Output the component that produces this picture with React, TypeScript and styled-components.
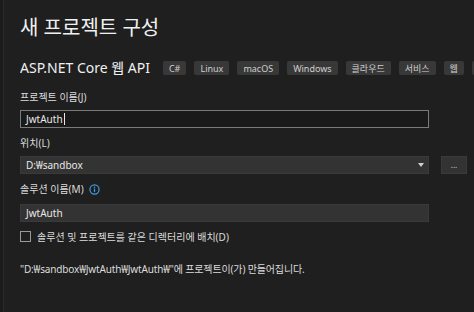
import styled, { createGlobalStyle } from "styled-components";

const GlobalStyle = createGlobalStyle`
  html, body {
    margin: 0;
    padding: 0;
    background: #1f1f1f;
  }
  body {
    font-family: "Noto Sans", "Noto Sans CJK KR", sans-serif;
    color: #e6e6e6;
  }
`;

const Frame = styled.div`
  width: 474px;
  height: 312px;
  display: flex;
  overflow: hidden;
  background: #1f1f1f;
`;

const EdgeStrip = styled.div`
  width: 3px;
  flex: none;
  background: #1b1b1b;
  border-right: 1px solid #2a2a2a;
`;

const Content = styled.main`
  flex: 1;
  padding: 13px 0 0 16px;
  display: flex;
  flex-direction: column;
  min-width: 0;
`;

const Title = styled.h1`
  margin: 0;
  font-size: 20px;
  font-weight: 400;
  line-height: 30px;
  color: #f0f0f0;
`;

const TemplateRow = styled.div`
  display: flex;
  align-items: center;
  gap: 8px;
  margin-top: 14px;
  white-space: nowrap;
  overflow: hidden;
`;

const TemplateName = styled.h2`
  margin: 0 5px 0 0;
  font-size: 14px;
  font-weight: 400;
  line-height: 22px;
  color: #f0f0f0;
`;

const Tag = styled.span`
  display: inline-flex;
  align-items: center;
  height: 14px;
  padding: 0 6px;
  background: #383838;
  border-radius: 2px;
  font-size: 9px;
  color: #cfcfcf;
`;

const Field = styled.div<{ $gap?: number; $top?: number }>`
  display: flex;
  flex-direction: column;
  gap: ${({ $gap }) => $gap ?? 6}px;
  margin-top: ${({ $top }) => $top ?? 8}px;
`;

const Label = styled.label`
  display: flex;
  align-items: center;
  gap: 5px;
  font-size: 10px;
  line-height: 14px;
  color: #dcdcdc;
`;

const InputRow = styled.div`
  display: flex;
  align-items: center;
  gap: 12px;
`;

const TextBox = styled.div<{ $focused?: boolean }>`
  width: 409px;
  height: 18px;
  box-sizing: border-box;
  display: flex;
  align-items: center;
  padding: 0 5px;
  font-size: 10px;
  color: #e8e8e8;
  background: ${({ $focused }) => ($focused ? "#1a1a1a" : "#333333")};
  border: 1px solid ${({ $focused }) => ($focused ? "#7a7a7a" : "#3a3a3a")};
`;

const Caret = styled.span`
  width: 1px;
  height: 12px;
  background: #e8e8e8;
  margin-left: 1px;
`;

const SelectBox = styled(TextBox)`
  justify-content: space-between;
  padding-right: 4px;
`;

const BrowseButton = styled.button`
  width: 26px;
  height: 18px;
  padding: 0;
  background: #333333;
  border: 1px solid #3a3a3a;
  color: #cfcfcf;
  font-size: 8px;
  line-height: 1;
  font-family: inherit;
`;

const CheckRow = styled.label`
  display: flex;
  align-items: center;
  gap: 6px;
  margin-top: 7px;
  font-size: 10px;
  color: #dcdcdc;
`;

const CheckBox = styled.span`
  width: 11px;
  height: 11px;
  border: 1px solid #9a9a9a;
  box-sizing: border-box;
`;

const Note = styled.p`
  margin: 17px 0 0;
  font-size: 10px;
  letter-spacing: -0.15px;
  color: #dcdcdc;
`;

function InfoIcon() {
  return (
    <svg width="11" height="11" viewBox="0 0 12 12">
      <circle cx="6" cy="6" r="5" fill="none" stroke="#3b9ee8" strokeWidth="1.3" />
      <circle cx="6" cy="3.6" r="0.8" fill="#3b9ee8" />
      <rect x="5.35" y="5" width="1.3" height="3.8" fill="#3b9ee8" />
    </svg>
  );
}

function DropArrow() {
  return (
    <svg width="6" height="4" viewBox="0 0 6 4">
      <path d="M0 0h6L3 4z" fill="#d0d0d0" />
    </svg>
  );
}

const tags = ["C#", "Linux", "macOS", "Windows", "클라우드", "서비스", "웹", "Web"];

export default function App() {
  return (
    <>
      <GlobalStyle />
      <Frame>
        <EdgeStrip />
        <Content>
          <Title>새 프로젝트 구성</Title>
          <TemplateRow>
            <TemplateName>ASP.NET Core 웹 API</TemplateName>
            {tags.map(t => (
              <Tag key={t}>{t}</Tag>
            ))}
          </TemplateRow>

          <Field $top={11}>
            <Label>프로젝트 이름(J)</Label>
            <TextBox $focused>
              JwtAuth<Caret />
            </TextBox>
          </Field>

          <Field>
            <Label>위치(L)</Label>
            <InputRow>
              <SelectBox>
                D:₩sandbox
                <DropArrow />
              </SelectBox>
              <BrowseButton>...</BrowseButton>
            </InputRow>
          </Field>

          <Field $gap={8}>
            <Label>
              솔루션 이름(M) <InfoIcon />
            </Label>
            <TextBox>JwtAuth</TextBox>
          </Field>

          <CheckRow>
            <CheckBox />
            솔루션 및 프로젝트를 같은 디렉터리에 배치(D)
          </CheckRow>

          <Note>"D:₩sandbox₩JwtAuth₩JwtAuth₩"에 프로젝트이(가) 만들어집니다.</Note>
        </Content>
      </Frame>
    </>
  );
}
